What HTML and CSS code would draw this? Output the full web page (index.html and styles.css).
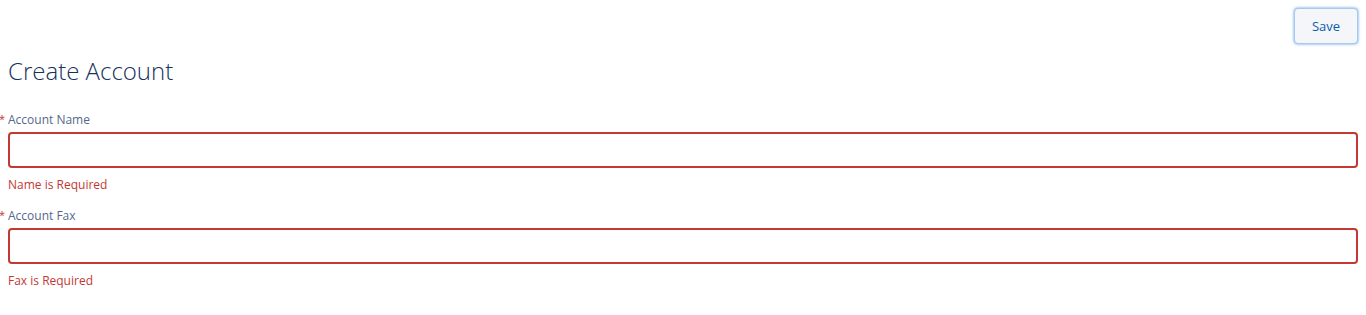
FILE: index.html
```html
<!DOCTYPE html>
<html lang="en">
<head>
<meta charset="utf-8">
<title>Create Account</title>
<link rel="stylesheet" href="styles.css">
</head>
<body>
<div class="page">
  <div class="toolbar">
    <button class="btn" type="button">Save</button>
  </div>
  <h1 class="title">Create Account</h1>
  <div class="form">
    <div class="field">
      <label class="label"><abbr class="required" title="required">*</abbr>Account Name</label>
      <input class="input" type="text">
      <div class="help">Name is Required</div>
    </div>
    <div class="field">
      <label class="label"><abbr class="required" title="required">*</abbr>Account Fax</label>
      <input class="input" type="text">
      <div class="help">Fax is Required</div>
    </div>
  </div>
</div>
</body>
</html>
```
FILE: styles.css
```css
html, body {
  margin: 0;
  padding: 0;
  background: #ffffff;
}
body {
  padding: 8px;
  font-family: "Open Sans", "Liberation Sans", sans-serif;
  color: #16325c;
}
.page {
  display: flex;
  flex-direction: column;
}
.toolbar {
  display: flex;
  justify-content: flex-end;
}
.btn {
  font-family: inherit;
  font-size: 13px;
  color: #0b5cab;
  background: #f4f6f9;
  border: 1px solid #a8c8ec;
  border-radius: 4px;
  box-shadow: 0 0 3px #5a9ae0;
  width: 64px;
  height: 36px;
  padding: 0;
  margin-top: 0;
}
.title {
  margin: 9px 0 0 0;
  font-size: 24px;
  font-weight: 300;
  line-height: 35px;
  color: #16325c;
}
.form {
  display: flex;
  flex-direction: column;
  gap: 13px;
  margin-top: 23px;
}
.field {
  display: flex;
  flex-direction: column;
  position: relative;
}
.label {
  position: relative;
  font-size: 12px;
  line-height: 18px;
  color: #54698d;
  margin-bottom: 3px;
}
.required {
  position: absolute;
  left: -9px;
  top: -1px;
  font-size: 11px;
  color: #c23934;
  text-decoration: none;
  border: 0;
}
.input {
  box-sizing: border-box;
  height: 36px;
  border: 2px solid #c23934;
  border-radius: 4px;
  background: #fff;
  outline: none;
  padding: 0 12px;
  font-family: inherit;
}
.help {
  margin-top: 8px;
  font-size: 12px;
  line-height: 18px;
  color: #c23934;
}
```
